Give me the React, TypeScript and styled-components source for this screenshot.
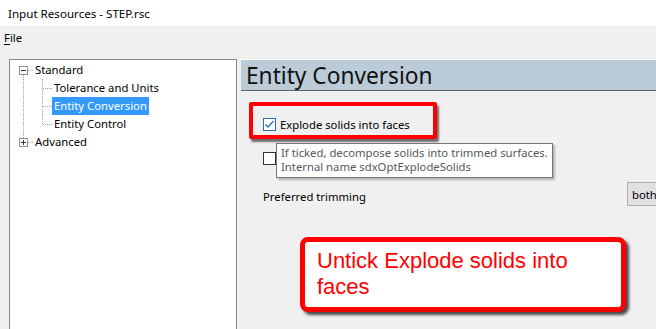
import React from 'react'
import styled, { createGlobalStyle } from 'styled-components'

const GlobalStyle = createGlobalStyle`
  html, body {
    margin: 0;
    padding: 0;
    background: #f0f0f0;
  }
`

const Window = styled.div`
  width: 656px;
  height: 329px;
  overflow: hidden;
  display: flex;
  flex-direction: column;
  background: #f0f0f0;
  font-family: 'Noto Sans', 'Open Sans', sans-serif;
  font-size: 11.3px;
  color: #000;
`

const TitleBar = styled.div`
  height: 26px;
  flex: none;
  display: flex;
  align-items: center;
  padding-left: 8px;
  background: #fff;
  font-size: 11.6px;
`

const MenuBar = styled.div`
  height: 22px;
  flex: none;
  display: flex;
  align-items: center;
  padding-left: 4px;
`

const MenuItem = styled.span`
  u {
    text-decoration: underline;
    text-underline-offset: 2px;
  }
`

const Body = styled.div`
  flex: 1;
  display: flex;
  gap: 4px;
  padding: 11px 0 0 9px;
  min-height: 0;
`

const TreePanel = styled.div`
  width: 228px;
  height: 290px;
  flex: none;
  box-sizing: border-box;
  border: 1px solid #828790;
  background: #fff;
  padding: 1px 0 0 4px;
`

const TreeRow = styled.div`
  height: 18px;
  display: flex;
  align-items: center;
`

const TreeLabel = styled.span<{ selected?: boolean }>`
  line-height: 18px;
  padding: 0 2px;
  white-space: nowrap;
  background: ${({ selected }) => (selected ? '#3399ff' : 'transparent')};
  color: ${({ selected }) => (selected ? '#fff' : '#000')};
`

const RightPane = styled.div`
  flex: 1;
  position: relative;
  display: flex;
  flex-direction: column;
`

const Header = styled.div`
  height: 30px;
  border-top: 1px solid #fff;
  border-bottom: 1px solid #5c636d;
  background: #bccbd8;
  display: flex;
  align-items: center;
  padding-left: 5px;
  font-size: 22.7px;
  color: #111;
`

const Content = styled.div`
  display: flex;
  flex-direction: column;
  gap: 14px;
  padding: 23px 0 0 22px;
`

const CheckRow = styled.div`
  height: 20px;
  display: flex;
  align-items: center;
  gap: 4px;
`

const CheckBox = styled.span<{ checked?: boolean }>`
  width: 13px;
  height: 13px;
  box-sizing: border-box;
  border: 1px solid ${({ checked }) => (checked ? '#2a6fb0' : '#333')};
  background: #fff;
  display: flex;
  align-items: center;
  justify-content: center;
`

const FieldRow = styled.div`
  display: grid;
  grid-template-columns: 364px 80px;
  align-items: center;
  height: 24px;
`

const FieldLabel = styled.span`
  padding-top: 5px;
`

const ComboBox = styled.div`
  height: 24px;
  box-sizing: border-box;
  border: 1px solid #adadad;
  background: #e1e1e1;
  display: flex;
  align-items: center;
  padding-left: 4px;
`

const RedFrame = styled.div`
  position: absolute;
  left: 8px;
  top: 43px;
  width: 188px;
  height: 37px;
  box-sizing: border-box;
  border: 4px solid #ff0000;
  border-radius: 2px;
  box-shadow: 2px 3px 2px rgba(0, 0, 0, 0.55);
`

const Tooltip = styled.div`
  position: absolute;
  left: 35px;
  top: 84px;
  width: 277px;
  height: 35px;
  box-sizing: border-box;
  border: 1px solid #767676;
  background: #fff;
  color: #575757;
  padding: 2px 0 0 4px;
  line-height: 14px;
  box-shadow: 2px 2px 2px rgba(0, 0, 0, 0.25);
`

const Callout = styled.div`
  position: absolute;
  left: 59px;
  top: 178px;
  width: 326px;
  height: 75px;
  box-sizing: border-box;
  border: 5px solid #ff0000;
  border-radius: 8px;
  background: #fff;
  padding: 6px 12px;
  font-family: 'Liberation Sans', Arial, sans-serif;
  font-size: 22px;
  line-height: 26px;
  color: #ff0000;
  box-shadow: 3px 3px 3px rgba(0, 0, 0, 0.7);
`

type LineProps = {
  up?: boolean
  down?: boolean
  right?: boolean
  box?: 'minus' | 'plus'
}

function TreeLine({ up, down, right, box }: LineProps) {
  const dot = { stroke: '#a0a0a0', strokeDasharray: '1 1', strokeWidth: 1 }
  return (
    <svg width="19" height="18" style={{ flex: 'none' }}>
      {up && <line x1="9.5" y1="0" x2="9.5" y2={box ? 5 : 9.5} {...dot} />}
      {down && <line x1="9.5" y1={box ? 14 : 9.5} x2="9.5" y2="18" {...dot} />}
      {right && <line x1={box ? 14 : 10} y1="9.5" x2="19" y2="9.5" {...dot} />}
      {box && (
        <g>
          <rect x="5.5" y="5.5" width="8" height="8" fill="#fff" stroke="#919191" />
          <line x1="7" y1="9.5" x2="12" y2="9.5" stroke="#333" />
          {box === 'plus' && <line x1="9.5" y1="7" x2="9.5" y2="12" stroke="#333" />}
        </g>
      )}
    </svg>
  )
}

function CheckMark() {
  return (
    <svg width="11" height="11" viewBox="0 0 11 11">
      <path d="M1.5 5.5 L4 8 L9.5 2" fill="none" stroke="#2a6fb0" strokeWidth="1.3" />
    </svg>
  )
}

export default function App() {
  return (
    <Window>
      <GlobalStyle />
      <TitleBar>Input Resources - STEP.rsc</TitleBar>
      <MenuBar>
        <MenuItem>
          <u>F</u>ile
        </MenuItem>
      </MenuBar>
      <Body>
        <TreePanel>
          <TreeRow>
            <TreeLine box="minus" right down />
            <TreeLabel>Standard</TreeLabel>
          </TreeRow>
          <TreeRow>
            <TreeLine up down />
            <TreeLine up down right />
            <TreeLabel>Tolerance and Units</TreeLabel>
          </TreeRow>
          <TreeRow>
            <TreeLine up down />
            <TreeLine up down right />
            <TreeLabel selected>Entity Conversion</TreeLabel>
          </TreeRow>
          <TreeRow>
            <TreeLine up down />
            <TreeLine up right />
            <TreeLabel>Entity Control</TreeLabel>
          </TreeRow>
          <TreeRow>
            <TreeLine box="plus" up right />
            <TreeLabel>Advanced</TreeLabel>
          </TreeRow>
        </TreePanel>
        <RightPane>
          <Header>Entity Conversion</Header>
          <Content>
            <CheckRow>
              <CheckBox checked>
                <CheckMark />
              </CheckBox>
              <span>Explode solids into faces</span>
            </CheckRow>
            <CheckRow>
              <CheckBox />
            </CheckRow>
            <FieldRow>
              <FieldLabel>Preferred trimming</FieldLabel>
              <ComboBox>both</ComboBox>
            </FieldRow>
          </Content>
          <RedFrame />
          <Tooltip>
            If ticked, decompose solids into trimmed surfaces.
            <br />
            Internal name sdxOptExplodeSolids
          </Tooltip>
          <Callout>Untick Explode solids into faces</Callout>
        </RightPane>
      </Body>
    </Window>
  )
}
